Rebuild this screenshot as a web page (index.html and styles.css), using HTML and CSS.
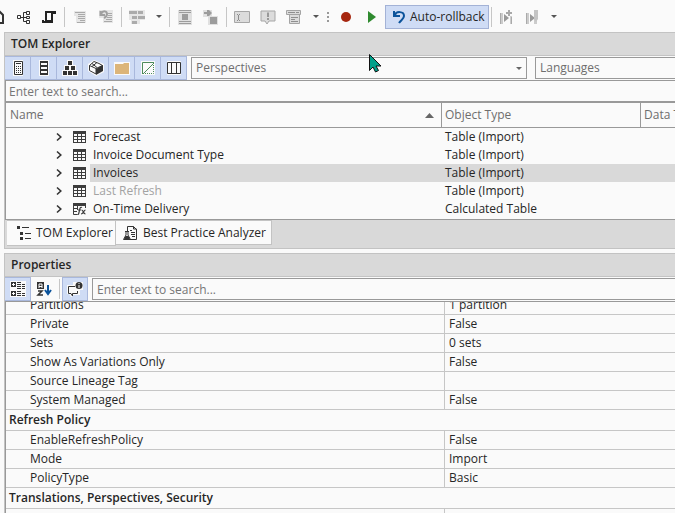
FILE: index.html
```html
<!DOCTYPE html>
<html lang="en">
<head>
    <meta charset="utf-8" />
    <meta name="viewport" content="width=device-width, initial-scale=1.0">
    <title>TOM Explorer</title>
    <link rel="stylesheet" href="styles.css">
</head>
<body>
    <!-- shared icons -->
    <svg class="sprite" aria-hidden="true">
        <symbol id="chevron" viewBox="0 0 8 10"><path d="M2 1.5 5.8 5 2 8.5" fill="none" stroke="#333" stroke-width="1.6"/></symbol>
        <symbol id="table" viewBox="0 0 13 12"><path d="M0 0h13v12H0z" fill="#3d3d3d"/><path d="M1 3h3v2H1zM5 3h3v2H5zM9 3h3v2H9zM1 6h3v2H1zM5 6h3v2H5zM9 6h3v2H9zM1 9h3v2H1zM5 9h3v2H5zM9 9h3v2H9z" fill="#fafafa"/></symbol>
        <symbol id="caret" viewBox="0 0 6 3"><path d="M0 0h6L3 3z" fill="#555"/></symbol>
    </svg>

    <div class="toolbar">
        <button class="tool" aria-label="New"><svg width="16" height="16"><path d="M2 2h8l4 4v8H2z" fill="none" stroke="#333" stroke-width="2"/></svg></button>
        <button class="tool" aria-label="Hierarchy"><svg width="16" height="16"><path d="M2.500 6.500h3v3h-3zM11.500 2.500h3v3h-3zM11.500 7.500h3v2h-3zM11.500 11.500h3v3h-3zM6 8.500h5M11 3.500H8.500v9H11" fill="none" stroke="#333"/></svg></button>
        <button class="tool" aria-label="Script"><svg width="16" height="16"><path d="M4 2h11v3h-3v9H1v-3h2v1h1z" fill="#222"/><path d="M6 4h4v7H6z" fill="#fafafa"/></svg></button>
        <span class="sep"></span>
        <button class="tool" aria-label="Format" disabled><svg width="16" height="16"><path d="M2 2h12v12H4V7H2z" fill="#e6e6e6"/><path d="M3 3.500h10M6 5.500h7M6 7.500h7M6 9.500h7M8 11.500h5M5 13.500h8" stroke="#a9a9a9"/></svg></button>
        <button class="tool" aria-label="Undo format" disabled><svg width="16" height="16"><path d="M1 1h14v13H5V9H1z" fill="#e6e6e6"/><path d="M2.500 2v4H7M3 5c2-4 6-3 6 0 0 2-1 3-3 4" fill="none" stroke="#a0a0a0" stroke-width="2"/><path d="M10 4.500h4M10 6.500h4M9 8.500h5M8 10.500h6M6 12.500h8" stroke="#a9a9a9"/></svg></button>
        <span class="sep"></span>
        <button class="tool" aria-label="Blocks" disabled><svg width="16" height="16"><path d="M0 1h16v10h-5v4H2v-4H0z" fill="#e6e6e6"/><path d="M0 2h8v3H0zM9 2h5v3H9zM3 7h5v3H3zM9 7h7v3H9zM3 12h5v3H3z" fill="#ababab"/></svg></button>
        <button class="drop" aria-label="More blocks"><svg width="6" height="3"><use href="#caret"/></svg></button>
        <span class="sep"></span>
        <button class="tool" aria-label="Align" disabled><svg width="16" height="16"><path d="M1 1h14v15H1z" fill="#e0e0e0"/><path d="M2 1.500h12M2 3.500h12M2 12.500h12M2 14.500h12" stroke="#9c9c9c"/><path d="M5 5h6v6H5z" fill="#9c9c9c"/></svg></button>
        <button class="tool" aria-label="Move" disabled><svg width="16" height="16"><path d="M0 1h9v6h6v9H5V8H0z" fill="#e0e0e0"/><path d="M1 3h3V1h2l3 3-3 3H4V5H1zM7 8h7v7H7z" fill="#9c9c9c"/></svg></button>
        <span class="sep"></span>
        <button class="tool" aria-label="Rename" disabled><svg width="16" height="16"><path d="M.5 2.500h15v11H.5z" fill="#dcdcdc" stroke="#a6a6a6"/><path d="M3 5.500h1M5 5.500h1M4.500 6v5M3 11.500h1M5 11.500h1" stroke="#8c8c8c"/></svg></button>
        <button class="tool" aria-label="Comment" disabled><svg width="16" height="16"><path d="M1 2h14v10H9l-2 3-2-3H1z" fill="#dcdcdc" stroke="#a6a6a6"/><path d="M8 3.500v4.500M8 9v2" stroke="#999" stroke-width="2"/></svg></button>
        <button class="tool" aria-label="Windows" disabled><svg width="16" height="16"><path d="M.5 1.500h14v4H.5zM3.500 5.500h10v9h-10z" fill="#dcdcdc" stroke="#a4a4a4"/><path d="M2 3.500h7M10 3.500h3M5 8.500h7M5 10.500h4M5 12.500h7" stroke="#8f8f8f"/></svg></button>
        <button class="drop" aria-label="More windows"><svg width="6" height="3"><use href="#caret"/></svg></button>
        <span class="grip"></span>
        <button class="tool" aria-label="Record"><svg width="16" height="16"><circle cx="8" cy="8" r="5" fill="#a6260f"/></svg></button>
        <button class="tool" aria-label="Run"><svg width="16" height="16"><path d="M4 2v12l8-6z" fill="#2f8a2f"/></svg></button>
        <button class="rollback"><svg width="14" height="16"><path d="M2 2v5h6" fill="none" stroke="#0b539b" stroke-width="2"/><path d="M3 6c1-4 9-4 9 1 0 3-3 4-5 7" fill="none" stroke="#0b539b" stroke-width="2"/></svg>Auto-rollback</button>
        <span class="sep"></span>
        <button class="tool" aria-label="Add step" disabled><svg width="16" height="16"><path d="M1 4h3v11H1zM11 7h2v8h-2z" fill="#ccc"/><path d="M1.500 4v11M12.500 8v7" stroke="#aaa"/><path d="M5 5v8l5-4z" fill="#999"/><path d="M7 4h6M10 1v6" stroke="#a8a8a8" stroke-width="2"/></svg></button>
        <button class="tool" aria-label="Edit step" disabled><svg width="16" height="16"><path d="M1 4h3v11H1zM9 8h3v7H9z" fill="#ccc"/><path d="M1.500 4v11" stroke="#aaa"/><path d="M5 5v8l5-4z" fill="#999"/><path d="M9 1h4v9l-2 3-2-3z" fill="#c4c4c4"/></svg></button>
        <button class="drop" aria-label="More steps"><svg width="6" height="3"><use href="#caret"/></svg></button>
    </div>

    <section class="panel explorer">
        <h2 class="panel-title">TOM Explorer</h2>
        <svg class="cursor" width="14" height="20" viewBox="0 0 14 20"><path d="M.5.5v16l3.500-3.500 2.500 5 3-1.500L7 12h5z" fill="#00a08a" stroke="#111"/></svg>
        <div class="filters">
            <button class="toggle" aria-label="Measures"><svg width="16" height="16"><path d="M3 0h10v16H3z" fill="#fafafa"/><path d="M4.500 1.500h8v13h-8z" fill="none" stroke="#333"/><path d="M6 3.500h5M6 6.500h1M8 6.500h1M10 6.500h1M6 8.500h1M8 8.500h1M10 8.500h1M6 10.500h1M8 10.500h1M10 10.500h1M6 12.500h1M8 12.500h1M10 12.500h1" stroke="#333"/></svg></button>
            <button class="toggle" aria-label="Columns"><svg width="16" height="16"><path d="M3 0h10v16H3z" fill="#fafafa"/><path d="M4 1h8v14H4z" fill="#333"/><path d="M5 3h6v2H5zM5 7h6v2H5zM5 11h6v2H5z" fill="#fafafa"/></svg></button>
            <button class="toggle" aria-label="Hierarchies"><svg width="16" height="16"><path d="M5 0h6v5h3v5h2v6H0v-6h2V5h3z" fill="#fafafa"/><path d="M6 1h4v4H6zM3 6h4v4H3zM9 6h4v4H9zM1 11h4v4H1zM6 11h4v4H6zM11 11h4v4h-4z" fill="#333"/></svg></button>
            <button class="toggle" aria-label="Partitions"><svg width="16" height="16"><path d="M6 0 0 4v7l8 5 8-4V4z" fill="#fafafa"/><path d="M1.500 5.500 6 1.500l5 2 3.500 2L8 8.500zM1.500 5.500v5L8 14V8.500M4 3.500l5 4M9 2.500l-5 4" fill="none" stroke="#333"/><path d="m8 9 7-4v6l-7 4z" fill="#333"/></svg></button>
            <button class="toggle" aria-label="Folders"><svg width="16" height="16"><path d="M0 2h16v13H0z" fill="#fafafa"/><path d="M1 4h8l1-1h5v11H1z" fill="#dcb579"/></svg></button>
            <button class="toggle" aria-label="Hidden"><svg width="16" height="16"><path d="M1 1h14v14H1z" fill="#fafafa"/><path d="M2.500 14V2.500H14M3 14 14 3" fill="none" stroke="#4c8a5b"/><path d="M3 13.500h10.500V3" fill="none" stroke="#4c8a5b" stroke-dasharray="1 1"/></svg></button>
            <button class="toggle" aria-label="Details"><svg width="16" height="16"><path d="M1 1h14v14H1z" fill="#fafafa"/><path d="M1.500 2.500h13v11h-13zM5.500 2v12M10.500 2v12" fill="none" stroke="#333"/></svg></button>
            <label class="combo"><select aria-label="Perspectives"><option>Perspectives</option></select></label>
            <label class="combo"><select aria-label="Languages"><option>Languages</option></select></label>
        </div>
        <input class="search" type="text" placeholder="Enter text to search..." aria-label="Search objects">
        <table class="tree">
            <thead>
                <tr><th class="col-name"><div>Name<svg width="9" height="5"><path d="M4.500 0 9 5H0z" fill="#666"/></svg></div></th><th class="col-type">Object Type</th><th>Data Type</th></tr>
            </thead>
            <tbody>
                <tr><td><div class="node"><svg class="chev"><use href="#chevron"/></svg><svg class="ico"><use href="#table"/></svg><span>Forecast</span></div></td><td>Table (Import)</td><td></td></tr>
                <tr><td><div class="node"><svg class="chev"><use href="#chevron"/></svg><svg class="ico"><use href="#table"/></svg><span>Invoice Document Type</span></div></td><td>Table (Import)</td><td></td></tr>
                <tr class="selected"><td><div class="node"><svg class="chev"><use href="#chevron"/></svg><svg class="ico"><use href="#table"/></svg><span>Invoices</span></div></td><td>Table (Import)</td><td></td></tr>
                <tr><td><div class="node hidden-object"><svg class="chev"><use href="#chevron"/></svg><svg class="ico"><use href="#table"/></svg><span>Last Refresh</span></div></td><td>Table (Import)</td><td></td></tr>
                <tr><td><div class="node"><svg class="chev"><use href="#chevron"/></svg><svg class="ico" viewBox="0 0 13 12"><path d="M0 0h13v3H0z" fill="#3d3d3d"/><path d="M.5 0v11.500H4M0 5.500h5M0 8.500h4M4.500 3v4M12.500 2v3" fill="none" stroke="#3d3d3d"/><path d="M4 12c2 0 2-2 2.500-5S8 4 9 4.500M5 7h3M8.500 7c2 0 1.500 4 4 4M12.500 7c-2 0-2 4-4.500 4" fill="none" stroke="#3d3d3d" stroke-width="1.200"/></svg><span>On-Time Delivery</span></div></td><td>Calculated Table</td><td></td></tr>
            </tbody>
        </table>
        <div class="tabs">
            <button class="tab active"><svg width="16" height="16"><path d="M1 1h3v3H1zM4 7h3v3H4zM4 12h3v3H4z" fill="#333"/><path d="M6 2.500h7M9 8.500h6M9 13.500h6" stroke="#333"/></svg>TOM Explorer</button>
            <button class="tab"><svg width="16" height="16"><path d="M4.500 7V1.500h6V4h3v10.500H7M10.500 1.500l3 3M7 5.500h2M8 7.500h4M8 9.500h4M9 11.500h3" fill="none" stroke="#333"/><path d="M2 6.500h4M3 6v4l-2.500 4.500h7L5 10V6" fill="none" stroke="#333"/><path d="M2.500 11h3L7 14H1z" fill="#333"/></svg>Best Practice Analyzer</button>
        </div>
    </section>

    <section class="panel properties">
        <h2 class="panel-title">Properties</h2>
        <div class="filters">
            <button class="toggle" aria-label="Categorized"><svg width="16" height="16"><path d="M0 0h16v16H0z" fill="#fafafa"/><path d="M1 1h5v5H1zM1 10h5v5H1z" fill="#333"/><path d="M2 3.500h3M3.500 2v3M2 12.500h3M3.500 11v3" stroke="#fff"/><path d="M7 1.500h4M7 3.500h8M7 5.500h8M7 7.500h8M7 10.500h4M7 12.500h8M7 14.500h8" stroke="#333" stroke-dasharray="4 1"/></svg></button>
            <button class="toggle plain" aria-label="Alphabetical"><svg width="16" height="16"><path d="M1 1h7v7H1z" fill="#333"/><path d="M3 7V3h3v4M3 5.500h3" fill="none" stroke="#fff"/><path d="M2 10h4l-4 4h5" fill="none" stroke="#333" stroke-width="1.500"/><path d="M12 4v9M9 9l3 4 3-4" fill="none" stroke="#0b539b" stroke-width="2"/></svg></button>
            <span class="sep"></span>
            <button class="toggle framed" aria-label="Descriptions"><svg width="16" height="16"><path d="M0 4h6V1h10v8h-3v5H5v2H4l-2-3H0z" fill="#fafafa"/><path d="M8 5.500H1.500v7H4l1.500 2.500v-2.500h5V10" fill="none" stroke="#333"/><circle cx="12" cy="4.500" r="3.500" fill="#333"/><path d="M12 2v1M12 4v3" stroke="#fff"/></svg></button>
            <input class="search-box" type="text" placeholder="Enter text to search..." aria-label="Search properties">
        </div>
        <div class="grid-view">
            <table class="grid">
                <tr><td class="prop">Partitions</td><td>1 partition</td></tr>
                <tr><td class="prop">Private</td><td>False</td></tr>
                <tr><td class="prop">Sets</td><td>0 sets</td></tr>
                <tr><td class="prop">Show As Variations Only</td><td>False</td></tr>
                <tr><td class="prop">Source Lineage Tag</td><td></td></tr>
                <tr><td class="prop">System Managed</td><td>False</td></tr>
                <tr class="category"><th colspan="2">Refresh Policy</th></tr>
                <tr><td class="prop">EnableRefreshPolicy</td><td>False</td></tr>
                <tr><td class="prop">Mode</td><td>Import</td></tr>
                <tr><td class="prop">PolicyType</td><td>Basic</td></tr>
                <tr class="category"><th colspan="2">Translations, Perspectives, Security</th></tr>
                <tr><td class="prop"></td><td></td></tr>
            </table>
        </div>
    </section>
</body>
</html>
```
FILE: styles.css
```css
* {
    box-sizing: border-box;
}
body {
    margin: 0;
    height: 100vh;
    display: flex;
    flex-direction: column;
    overflow: hidden;
    background-color: #fafafa;
    color: #262626;
    font-family: "Segoe UI", "Open Sans", "Noto Sans", sans-serif;
    font-size: 12px;
    line-height: 18px;
}
button,
input,
select {
    font: inherit;
    color: inherit;
    margin: 0;
    padding: 0;
    border: none;
    border-radius: 0;
    background: none;
}
svg {
    display: block;
    flex: none;
}
.sprite {
    position: absolute;
    width: 0;
    height: 0;
}

/* top toolbar, scrolled a little past its left edge */
.toolbar {
    display: flex;
    align-items: center;
    flex: none;
    height: 32px;
    padding-top: 1px;
    margin-left: -16px;
}
.tool {
    flex: none;
    width: 26px;
    height: 24px;
    display: flex;
    align-items: center;
    justify-content: center;
}
.drop {
    flex: none;
    width: 17px;
    height: 24px;
    display: flex;
    align-items: center;
    justify-content: center;
}
.sep {
    flex: none;
    width: 1px;
    height: 20px;
    margin: 0 2px;
    background-color: #c6c6c6;
}
.grip {
    flex: none;
    width: 9px;
    height: 10px;
    border-left: 2px dotted #999;
    margin-left: 3px;
    margin-right: -3px;
}
.rollback {
    flex: none;
    display: flex;
    align-items: center;
    gap: 4px;
    height: 24px;
    padding: 0 3px 0 6px;
    border: 1px solid #a3b2d6;
    background-color: #cfdcf5;
}

/* docked panels */
.panel {
    position: relative;
    margin-left: 4px;
    border-top: 1px solid #c3c3c3;
    border-left: 1px solid #c3c3c3;
    background-color: #d9d9d9;
}
.explorer {
    flex: none;
    border-bottom: 1px solid #c3c3c3;
    margin-bottom: 4px;
}
.panel-title {
    margin: 0;
    height: 23px;
    padding-left: 6px;
    border-bottom: 1px solid #c3c3c3;
    font-size: 12px;
    line-height: 22px;
    font-weight: 600;
}
.cursor {
    position: absolute;
    top: 21px;
    left: 364px;
    z-index: 2;
}
.filters {
    display: flex;
    align-items: center;
    height: 24px;
    overflow: hidden;
    background-color: #fafafa;
}
.toggle {
    flex: none;
    width: 26px;
    height: 24px;
    display: flex;
    align-items: center;
    justify-content: center;
    border: 1px solid #a9b8dc;
    border-left: none;
    background-color: #cfdcf5;
}
.toggle.plain {
    border-color: transparent;
    background-color: transparent;
}
.toggle.framed {
    border-left: 1px solid #a9b8dc;
}
.combo {
    position: relative;
    flex: none;
    width: 336px;
    margin-left: 4px;
}
.combo + .combo {
    margin-left: 8px;
}
.combo select {
    display: block;
    width: 100%;
    height: 22px;
    padding-left: 4px;
    border: 1px solid #999;
    appearance: none;
    color: #6e6e6e;
}
.combo::after {
    content: "";
    position: absolute;
    top: 10px;
    right: 5px;
    border: 3px solid transparent;
    border-top-color: #666;
    border-bottom: none;
}
.search {
    display: block;
    width: 100%;
    height: 23px;
    padding-left: 3px;
    border: 1px solid #999;
    border-right: none;
    border-bottom-width: 2px;
    background-color: #fafafa;
}
.search-box {
    flex: 1;
    min-width: 0;
    height: 22px;
    margin-left: 4px;
    padding-left: 4px;
    border: 1px solid #999;
    border-right: none;
}
::placeholder {
    color: #767676;
    opacity: 1;
}

/* object tree */
.tree {
    width: 100%;
    padding-bottom: 1px;
    table-layout: fixed;
    border-collapse: separate;
    border-spacing: 0;
    border-left: 1px solid #999;
    border-bottom: 1px solid #999;
    background-color: #fafafa;
}
.tree th {
    height: 25px;
    padding: 0 0 0 3px;
    border-right: 1px solid #999;
    border-bottom: 1px solid #999;
    font-weight: normal;
    text-align: left;
    white-space: nowrap;
    overflow: hidden;
    color: #6e6e6e;
}
.tree th:last-child {
    border-right: none;
}
.tree .col-name {
    width: 436px;
    padding-left: 4px;
}
.tree .col-type {
    width: 199px;
}
.col-name div {
    display: flex;
    align-items: center;
    justify-content: space-between;
    padding-right: 7px;
}
.tree td {
    height: 18px;
    padding: 0 0 0 3px;
    line-height: 18px;
}
.tree td:first-child {
    padding-left: 49px;
}
.node {
    display: flex;
    align-items: center;
}
.node span {
    flex: 1;
    padding-left: 3px;
}
.chev {
    width: 8px;
    height: 10px;
    margin-right: 10px;
}
.ico {
    width: 13px;
    height: 12px;
    margin-right: 4px;
}
.hidden-object span {
    color: #a3a3a3;
}
.selected td + td,
.selected .node span {
    background-color: #d9d9d9;
}

/* tabs under the tree */
.tabs {
    display: flex;
    align-items: flex-start;
    height: 28px;
    padding: 0 2px;
}
.tab {
    display: flex;
    align-items: center;
    gap: 4px;
    height: 25px;
    padding: 0 5px 0 7px;
    border: 1px solid #c3c3c3;
    border-left: none;
    background-color: #fafafa;
}
.tab.active {
    padding: 0 2px 0 9px;
    height: 26px;
}

/* property grid */
.properties {
    flex: 1;
    min-height: 0;
    display: flex;
    flex-direction: column;
}
.properties .filters {
    flex: none;
}
.grid-view {
    flex: 1;
    min-height: 0;
    overflow: hidden;
    border-top: 1px solid #999;
    border-left: 1px solid #999;
    background-color: #fafafa;
}
.grid {
    width: 100%;
    margin-top: -6px;
    table-layout: fixed;
    border-collapse: separate;
    border-spacing: 0;
}
.grid td {
    height: 19px;
    padding: 0 0 0 4px;
    border-bottom: 1px solid #c6c6c6;
}
.grid .prop {
    width: 439px;
    padding-left: 24px;
    border-right: 1px solid #c6c6c6;
}
.category th {
    height: 21px;
    padding: 0 0 0 3px;
    border-bottom: 1px solid #c6c6c6;
    text-align: left;
    font-weight: 600;
}
```
